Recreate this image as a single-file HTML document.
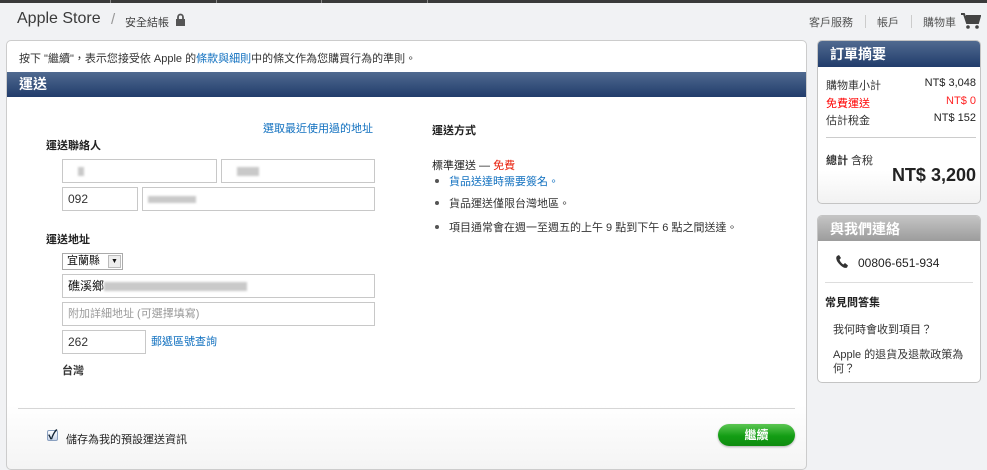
<!DOCTYPE html>
<html><head><meta charset="utf-8"><style>
*{margin:0;padding:0;box-sizing:border-box}
body{width:987px;height:462px;overflow:hidden;background:#f1f2f4;font-family:"Liberation Sans","Noto Sans CJK TC",sans-serif;font-size:11px;color:#333;position:relative}
.a{position:absolute;white-space:nowrap}
.b{font-weight:bold;color:#222}
.l{color:#0f6fbf}
.in{position:absolute;border:1px solid #c8c8c8;background:#fff;height:24px;padding-left:15px;line-height:22px;font-size:12px;color:#333}
.blur{display:inline-block;height:9px;background:#c9c9c9;vertical-align:middle;filter:blur(1px)}
.hdr{position:absolute;height:26px;color:#fff;font-weight:bold;font-size:14px;line-height:26px;padding-left:12px}
</style></head><body>
<div class="a" style="left:0;top:0;width:987px;height:3px;background:#3a3a3a"></div>
<div class="a" style="left:110px;top:0;width:1px;height:3px;background:#888"></div>
<div class="a" style="left:216px;top:0;width:1px;height:3px;background:#888"></div>
<div class="a" style="left:321px;top:0;width:1px;height:3px;background:#888"></div>
<div class="a" style="left:427px;top:0;width:1px;height:3px;background:#888"></div>
<div class="a" style="left:17px;top:10px;font-size:16px;color:#3a3a3a">Apple Store</div>
<div class="a" style="left:111px;top:11px;font-size:15px;color:#999">/</div>
<div class="a" style="left:125px;top:14px;font-size:11px;color:#444">安全結帳</div>
<svg class="a" style="left:175px;top:13px" width="11" height="13" viewBox="0 0 11 13"><path d="M3 6V4a2.5 2.5 0 0 1 5 0v2" stroke="#555" stroke-width="1.8" fill="none"/><rect x="1" y="6" width="9" height="7" fill="#555"/></svg>
<div class="a" style="left:809px;top:14px;color:#555">客戶服務</div>
<div class="a" style="left:865px;top:15px;width:1px;height:13px;background:#ccc"></div>
<div class="a" style="left:877px;top:14px;color:#555">帳戶</div>
<div class="a" style="left:911px;top:15px;width:1px;height:13px;background:#ccc"></div>
<div class="a" style="left:923px;top:14px;color:#555">購物車</div>
<svg class="a" style="left:961px;top:13px" width="20" height="16" viewBox="0 0 20 16"><path d="M0 1h3l3 9h11l2-7H5" stroke="#444" stroke-width="2" fill="#444"/><circle cx="7" cy="14" r="1.8" fill="#444"/><circle cx="16" cy="14" r="1.8" fill="#444"/></svg>

<div class="a" style="left:6px;top:40px;width:801px;height:430px;background:linear-gradient(#fff 85%,#f4f4f4);border:1px solid #ccc;border-radius:5px"></div>
<div class="a" style="left:19px;top:50px;color:#333">按下 "繼續"，表示您接受依 Apple 的<span class="l">條款與細則</span>中的條文作為您購買行為的準則。</div>
<div class="hdr" style="left:7px;top:72px;width:799px;height:25px;line-height:25px;background:linear-gradient(#506a90,#213c6b)">運送</div>

<div class="a l" style="left:263px;top:120px">選取最近使用過的地址</div>
<div class="a b" style="left:46px;top:137px">運送聯絡人</div>
<div class="in" style="left:62px;top:159px;width:155px"><span class="blur" style="width:6px"></span></div>
<div class="in" style="left:221px;top:159px;width:154px"><span class="blur" style="width:22px"></span></div>
<div class="in" style="left:62px;top:187px;width:76px;padding-left:5px">092</div>
<div class="in" style="left:142px;top:187px;width:233px;padding-left:5px"><span class="blur" style="width:48px;height:7px"></span></div>
<div class="a b" style="left:46px;top:231px">運送地址</div>
<div class="a" style="left:62px;top:253px;width:61px;height:17px;border:1px solid #aaa;background:#fff;font-size:11px;line-height:15px;padding-left:4px;color:#111">宜蘭縣<span style="position:absolute;right:1px;top:1px;width:13px;height:13px;border:1px solid #bbb;background:#eee;font-size:7px;text-align:center;line-height:12px">▼</span></div>
<div class="in" style="left:62px;top:274px;width:313px;padding-left:5px;color:#111">礁溪鄉<span class="blur" style="width:143px"></span></div>
<div class="in" style="left:62px;top:302px;width:313px;padding-left:5px;color:#999;font-size:11px">附加詳細地址 (可選擇填寫)</div>
<div class="in" style="left:62px;top:330px;width:84px;padding-left:5px">262</div>
<div class="a l" style="left:151px;top:333px">郵遞區號查詢</div>
<div class="a b" style="left:62px;top:362px;color:#333">台灣</div>

<div class="a b" style="left:432px;top:122px">運送方式</div>
<div class="a" style="left:432px;top:157px;color:#222">標準運送 — <span style="color:#e8200c">免費</span></div>
<div class="a" style="left:435px;top:179px;width:4px;height:4px;border-radius:2px;background:#555"></div>
<div class="a l" style="left:449px;top:173px">貨品送達時需要簽名。</div>
<div class="a" style="left:435px;top:201px;width:4px;height:4px;border-radius:2px;background:#555"></div>
<div class="a" style="left:449px;top:195px">貨品運送僅限台灣地區。</div>
<div class="a" style="left:435px;top:225px;width:4px;height:4px;border-radius:2px;background:#555"></div>
<div class="a" style="left:449px;top:219px">項目通常會在週一至週五的上午 9 點到下午 6 點之間送達。</div>

<div class="a" style="left:18px;top:408px;width:777px;height:1px;background:#d6d6d6"></div>
<div class="a" style="left:47px;top:430px;width:11px;height:11px;border:1px solid #8aa0c0;background:linear-gradient(#fff,#c9d6ea);border-radius:2px"></div>
<div class="a" style="left:48px;top:424px;font-size:13px;color:#123;font-weight:bold">✓</div>
<div class="a" style="left:66px;top:431px;color:#222">儲存為我的預設運送資訊</div>
<div class="a" style="left:718px;top:424px;width:77px;height:22px;border-radius:11px;background:linear-gradient(#5cc653,#139d14 55%,#0f8c10);box-shadow:0 1px 2px rgba(0,0,0,.3);color:#fff;font-weight:bold;text-align:center;line-height:22px;font-size:12px">繼續</div>

<div class="a" style="left:817px;top:40px;width:164px;height:164px;background:linear-gradient(#fff 80%,#f2f2f2);border:1px solid #c4c4c4;border-radius:5px;overflow:hidden">
<div class="hdr" style="left:0;top:0;width:164px;background:linear-gradient(#506a90,#213c6b)">訂單摘要</div></div>
<div class="a" style="left:826px;top:77px">購物車小計</div><div class="a" style="right:11px;top:77px;color:#222">NT$ 3,048</div>
<div class="a" style="left:826px;top:95px;color:#f00">免費運送</div><div class="a" style="right:11px;top:95px;color:#f22">NT$ 0</div>
<div class="a" style="left:826px;top:112px">估計稅金</div><div class="a" style="right:11px;top:112px;color:#222">NT$ 152</div>
<div class="a" style="left:826px;top:137px;width:150px;height:1px;background:#ccc"></div>
<div class="a" style="left:826px;top:152px"><b>總計</b> 含稅</div>
<div class="a" style="right:11px;top:165px;font-size:18px;font-weight:bold;color:#222">NT$ 3,200</div>

<div class="a" style="left:817px;top:215px;width:164px;height:168px;background:#fff;border:1px solid #c4c4c4;border-radius:5px;overflow:hidden">
<div class="hdr" style="left:0;top:0;width:164px;height:25px;background:linear-gradient(#c4c4c4,#9c9c9c)">與我們連絡</div></div>
<svg class="a" style="left:835px;top:255px" width="13" height="14" viewBox="0 0 13 14"><path d="M2 1l2-1 2 3-1.5 1.5c.5 2 2 3.8 3.8 5L10 8l3 2.5-1 2c-1 .8-3 .5-5-1S2 7 1.5 4.5C1 3 1.2 2 2 1z" fill="#333"/></svg>
<div class="a" style="left:858px;top:256px;font-size:12px;color:#222">00806-651-934</div>
<div class="a" style="left:825px;top:282px;width:148px;height:1px;background:#ddd"></div>
<div class="a b" style="left:825px;top:294px;font-size:11px">常見問答集</div>
<div class="a" style="left:833px;top:321px;font-size:11px">我何時會收到項目？</div>
<div class="a" style="left:833px;top:346px;font-size:11px">Apple 的退貨及退款政策為</div>
<div class="a" style="left:833px;top:360px;font-size:11px">何？</div>
</body></html>
